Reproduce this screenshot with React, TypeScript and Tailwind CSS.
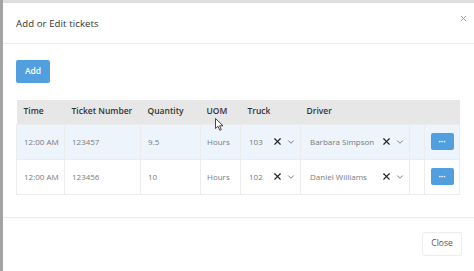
import { X, ChevronDown } from "lucide-react";

type Row = {
    time: string;
    ticket: string;
    qty: string;
    uom: string;
    truck: string;
    driver: string;
};

const rows: Row[] = [
    { time: "12:00 AM", ticket: "123457", qty: "9.5", uom: "Hours", truck: "103", driver: "Barbara Simpson" },
    { time: "12:00 AM", ticket: "123456", qty: "10", uom: "Hours", truck: "102", driver: "Daniel Williams" },
];

function Picker({ value }: { value: string }) {
    return (
        <div className="flex items-center justify-between pr-1">
            <span>{value}</span>
            <span className="flex items-center gap-[3px]">
                <X size={11} strokeWidth={2.4} className="text-[#222]" />
                <ChevronDown size={10} strokeWidth={2} className="text-[#666]" />
            </span>
        </div>
    );
}

export default function App() {
    return (
        <div
            className="flex w-[474px] h-[271px] bg-white overflow-hidden"
            style={{ fontFamily: "'Open Sans', 'Liberation Sans', sans-serif" }}
        >
            <div className="w-[3px] bg-[#a3a3a3]" />
            <div className="flex-1 flex flex-col">
                <div className="h-[3px] bg-[#dedede]" />
                {/* header */}
                <div className="h-[41px] flex items-center justify-between pl-[13px] pr-[6px] border-b border-[#ececec]">
                    <h2 className="text-[9.6px] text-[#333] tracking-[0.1px] pt-[2px]">Add or Edit tickets</h2>
                    <X size={9} strokeWidth={2.5} className="text-[#999] mb-[10px]" />
                </div>

                {/* body */}
                <div className="pl-[13px] pr-[12px] pt-[16px] pb-[22px] border-b border-[#ececec]">
                    <button className="block w-[34px] h-[23px] rounded-[2px] bg-[#529fdf] text-white text-[8.5px] font-semibold">
                        Add
                    </button>
                    <div className="relative mt-[17px]">
                        <table className="w-[443px] table-fixed border-collapse text-[8px] text-[#7a7a7a]">
                            <colgroup>
                                <col className="w-[48px]" />
                                <col className="w-[76px]" />
                                <col className="w-[60px]" />
                                <col className="w-[40px]" />
                                <col className="w-[60px]" />
                                <col className="w-[109px]" />
                                <col className="w-[15px]" />
                                <col className="w-[35px]" />
                            </colgroup>
                            <thead>
                                <tr className="h-[24px] bg-[#e7e7e7] text-left text-[#333] text-[8.5px]">
                                    <th className="pl-[7px] font-semibold">Time</th>
                                    <th className="pl-[7px] font-semibold">Ticket Number</th>
                                    <th className="pl-[7px] font-semibold">Quantity</th>
                                    <th className="pl-[6px] font-semibold">UOM</th>
                                    <th className="pl-[7px] font-semibold">Truck</th>
                                    <th className="pl-[6px] font-semibold">Driver</th>
                                    <th />
                                    <th />
                                </tr>
                            </thead>
                            <tbody>
                                {rows.map((r, i) => (
                                    <tr
                                        key={r.ticket}
                                        className={`h-[35px] border border-[#ececec] ${i === 0 ? "bg-[#eef4fb]" : "bg-white"}`}
                                    >
                                        <td className="pl-[7px] border-r border-[#ececec]">{r.time}</td>
                                        <td className="pl-[7px] border-r border-[#ececec]">{r.ticket}</td>
                                        <td className="pl-[7px] border-r border-[#ececec]">{r.qty}</td>
                                        <td className="pl-[6px] border-r border-[#ececec]">{r.uom}</td>
                                        <td className="pl-[8px] border-r border-[#ececec]">
                                            <Picker value={r.truck} />
                                        </td>
                                        <td className="pl-[9px] border-r border-[#ececec]">
                                            <Picker value={r.driver} />
                                        </td>
                                        <td className="border-r border-[#ececec]" />
                                        <td className="text-center">
                                            <button className="w-[23px] h-[17px] rounded-[2px] bg-[#529fdf] text-white text-[8px] leading-none font-bold align-middle">
                                                ···
                                            </button>
                                        </td>
                                    </tr>
                                ))}
                            </tbody>
                        </table>
                        {/* mouse pointer */}
                        <svg
                            className="absolute left-[199px] top-[18px]"
                            width="9"
                            height="13"
                            viewBox="0 0 9 13"
                        >
                            <path d="M0.5 0.5 L0.5 10.5 L3 8.3 L4.8 12.3 L6.3 11.6 L4.6 7.8 L8 7.8 Z" fill="white" stroke="#333" strokeWidth="0.9" />
                        </svg>
                    </div>
                </div>

                {/* footer */}
                <div className="flex justify-end pt-[14px] pr-[12px]">
                    <button className="w-[40px] h-[24px] border border-[#eeeeee] rounded-[2px] text-[8.5px] text-[#555]">
                        Close
                    </button>
                </div>
            </div>
        </div>
    );
}
